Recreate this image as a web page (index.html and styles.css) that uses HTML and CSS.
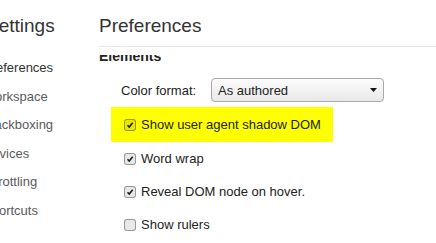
FILE: index.html
```html
<!DOCTYPE html>
<html>
<head>
    <title>Settings</title>
    <meta name="viewport" content="width=device-width, initial-scale=1.0">
    <link rel="stylesheet" href="styles.css">
</head>
<body>
    <div class="settings">
        <!-- Sidebar -->
        <div class="sidebar">
            <h1 class="sidebar-title">Settings</h1>
            <ul class="tabs">
                <li class="tab selected">Preferences</li>
                <li class="tab">Workspace</li>
                <li class="tab">Blackboxing</li>
                <li class="tab">Devices</li>
                <li class="tab">Throttling</li>
                <li class="tab">Shortcuts</li>
            </ul>
        </div>

        <!-- Panel -->
        <div class="panel">
            <div class="panel-header">
                <h2 class="panel-title">Preferences</h2>
            </div>
            <div class="panel-body">
                <h3 class="section-title">Elements</h3>
                <div class="field">
                    <label class="field-label">Color format:</label>
                    <div class="select">
                        <span>As authored</span>
                        <svg width="7" height="4" viewBox="0 0 7 4"><path d="M0 0 L7 0 L3.5 4 Z" fill="#111"/></svg>
                    </div>
                </div>
                <div class="options">
                    <label class="option highlight">
                        <span class="box"><svg width="12" height="12" viewBox="0 0 12 12"><path d="M3 6.3 L5.1 8.4 L9.2 3.4" fill="none" stroke="#1a1a1a" stroke-width="1.9"/></svg></span>
                        Show user agent shadow DOM
                    </label>
                    <label class="option">
                        <span class="box"><svg width="12" height="12" viewBox="0 0 12 12"><path d="M3 6.3 L5.1 8.4 L9.2 3.4" fill="none" stroke="#1a1a1a" stroke-width="1.9"/></svg></span>
                        Word wrap
                    </label>
                    <label class="option">
                        <span class="box"><svg width="12" height="12" viewBox="0 0 12 12"><path d="M3 6.3 L5.1 8.4 L9.2 3.4" fill="none" stroke="#1a1a1a" stroke-width="1.9"/></svg></span>
                        Reveal DOM node on hover.
                    </label>
                    <label class="option">
                        <span class="box"></span>
                        Show rulers
                    </label>
                </div>
            </div>
        </div>
    </div>
</body>
</html>
```

FILE: styles.css
```css
body {
    font-family: "Liberation Sans", Arial, sans-serif;
    font-size: 13px;
    color: #333;
    background: #fff;
    margin: 0;
    padding: 0;
    overflow: hidden;
}
.settings {
    display: flex;
    margin-left: -17px;
    height: 243px;
}
.sidebar {
    width: 116px;
    flex-shrink: 0;
}
.sidebar-title {
    margin: 0;
    padding: 14px 0 0 3px;
    font-size: 19px;
    font-weight: normal;
    line-height: 24px;
    color: #333;
}
.tabs {
    list-style: none;
    margin: 16px 0 0 0;
    padding: 0;
}
.tab {
    height: 28.6px;
    line-height: 28.6px;
    color: #5a5a5a;
    white-space: nowrap;
}
.tab.selected {
    color: #333;
}
.panel {
    flex: 1;
    display: flex;
    flex-direction: column;
}
.panel-header {
    padding: 14px 0 8px 0;
    border-bottom: 1px solid #e8e8e8;
}
.panel-title {
    margin: 0;
    font-size: 19px;
    font-weight: normal;
    line-height: 24px;
    color: #333;
}
/* body is scrolled a little: the section title sits partly under the header */
.panel-body {
    margin-top: 8px;
    overflow: hidden;
    flex: 1;
}
.section-title {
    margin: -7px 0 0 0;
    font-size: 14px;
    font-weight: bold;
    line-height: 17px;
    color: #222;
}
.field {
    display: flex;
    align-items: center;
    margin-top: 13px;
    padding-left: 22px;
}
.field-label {
    width: 90px;
    color: #222;
}
.select {
    width: 173px;
    height: 24px;
    box-sizing: border-box;
    display: flex;
    align-items: center;
    justify-content: space-between;
    padding: 0 6px 0 6px;
    border: 1px solid #a8a8a8;
    border-radius: 4px;
    background: linear-gradient(#fcfcfc, #e9e9e9);
    color: #222;
}
.options {
    margin-top: 5px;
    padding-left: 12px;
}
.option {
    display: flex;
    align-items: center;
    width: fit-content;
    height: 33px;
    padding: 0 12px 0 13px;
    gap: 5px;
    color: #222;
    white-space: nowrap;
}
.option.highlight {
    height: 35px;
    background: #ffff00;
}
.box {
    width: 12px;
    height: 12px;
    box-sizing: border-box;
    border: 1px solid rgba(0, 0, 0, 0.35);
    border-radius: 3px;
    background: rgba(0, 0, 0, 0.09);
    display: flex;
    align-items: center;
    justify-content: center;
}
.box svg {
    display: block;
}
```
